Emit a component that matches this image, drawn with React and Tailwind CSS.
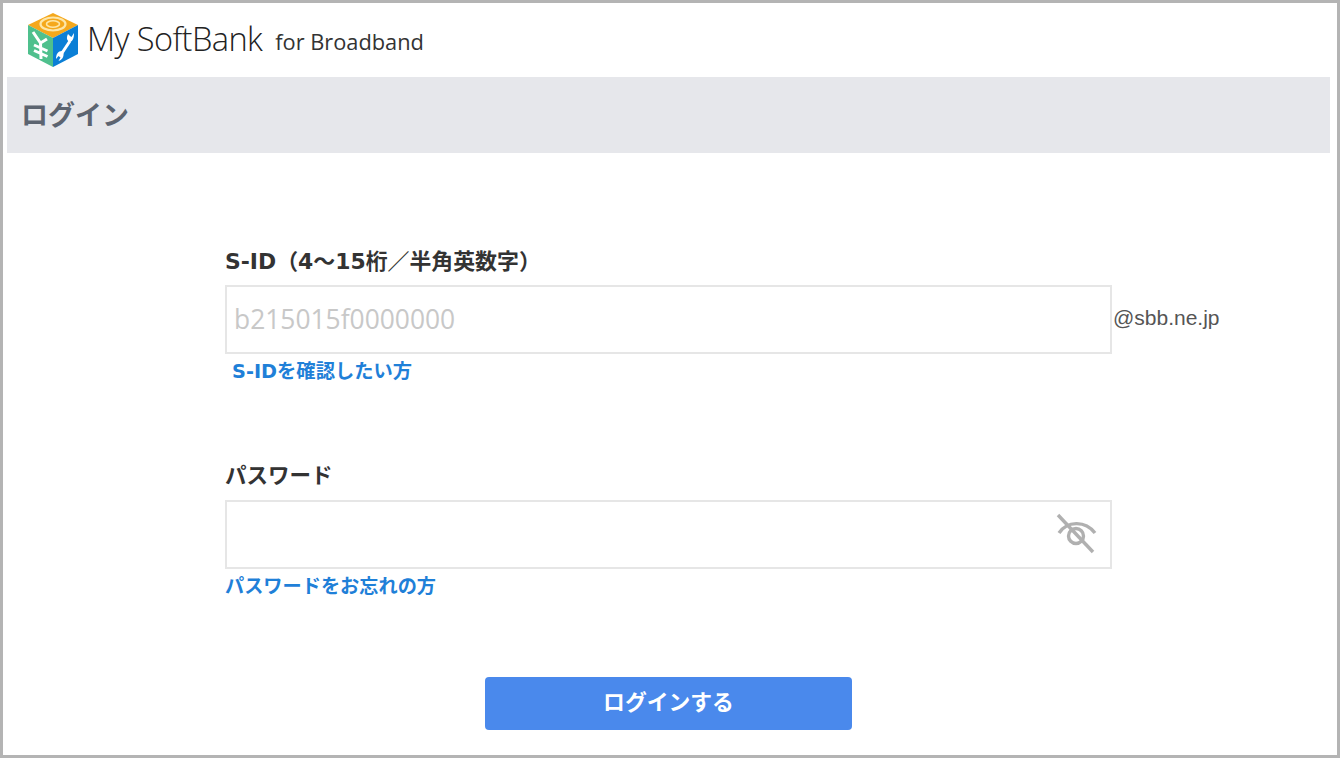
const jp = "font-['Liberation_Sans','Noto_Sans_CJK_JP',sans-serif]";
const wide = "font-['DejaVu_Sans','Noto_Sans_CJK_JP',sans-serif]";

const CubeLogo = () => (
  <svg width="52" height="56" viewBox="0 0 52 56" className="shrink-0">
    <polygon points="26,1 51,13 26,26 1,13" fill="#f5a81c" />
    <polygon points="1,13 26,26 26,55 1,42" fill="#4fc08d" />
    <polygon points="51,13 26,26 26,55 51,42" fill="#0b7fd6" />
    <ellipse cx="26" cy="12" rx="12.5" ry="6.5" fill="none" stroke="#fde6a8" strokeWidth="2.2" />
    <ellipse cx="26" cy="12" rx="6.5" ry="3.2" fill="none" stroke="#fde6a8" strokeWidth="1.6" />
    <path d="M6 20 L13.5 31 L20 27 M13.5 31 L14 47 M7 33 L20.5 39 M7 38.5 L20.5 44.5" fill="none" stroke="#fff" strokeWidth="3" />
    <path d="M33 44 L43 29" fill="none" stroke="#fff" strokeWidth="3" />
    <path d="M41 22 C39 26 40 29 43 30 C46 29 47 26 47 21 L44.5 25 L43 24 Z" fill="#fff" />
    <path d="M35 39 C31 39 29 42 29 47 L31.5 44 L33.5 45.5 L31.5 49 C35 48 37 45 36.5 41 Z" fill="#fff" />
  </svg>
);

const HiddenEye = () => (
  <svg width="42" height="42" viewBox="0 0 42 42" fill="none" stroke="#b0b0b0" strokeWidth="3.4" className="absolute right-[13px] top-[10px]">
    <path d="M4 21 C12 9 30 8 40 21" />
    <circle cx="21" cy="24" r="7.5" />
    <path d="M3 3 L38 40" />
  </svg>
);

export default function App() {
  return (
    <div className={`w-[1340px] h-[758px] border-[3px] border-[#b4b4b4] bg-white overflow-hidden ${jp}`}>
      <header className="h-[74px] flex items-center pl-[24px]">
        <CubeLogo />
        <span className="ml-[8px] mb-[1px] text-[32.6px] leading-none text-[#222] font-['Open_Sans',sans-serif] font-light tracking-[-0.6px]">My SoftBank</span>
        <span className="ml-[13px] mt-[3px] text-[21.8px] leading-none text-[#333] font-['Open_Sans',sans-serif]">for Broadband</span>
      </header>

      <div className="mx-[4px] w-[1323px] h-[76px] bg-[#e6e7eb] flex items-center pl-[14px] pt-[3px]">
        <h1 className="text-[27px] font-bold text-[#5c6470]">ログイン</h1>
      </div>

      <main className="pl-[222px] pt-[95px]">
        <label className={`block text-[21.9px] leading-[28px] font-bold text-[#333] ${wide}`}>S-ID（4～15桁／半角英数字）</label>
        <div className="mt-[9px] flex items-center">
          <div className="w-[887px] h-[69px] border-2 border-[#e6e6e6] flex items-center pl-[7px] text-[26.4px] text-[#c8c8c8] font-['Open_Sans',sans-serif]">
            b215015f0000000
          </div>
          <span className="ml-[1px] mb-[3px] text-[21px] text-[#555]">@sbb.ne.jp</span>
        </div>
        <a className={`block mt-[5px] ml-[7px] text-[19.3px] leading-[26px] font-bold text-[#1f80d8] ${wide}`}>S-IDを確認したい方</a>

        <label className="block mt-[77px] text-[21.5px] leading-[28px] font-bold text-[#333]">パスワード</label>
        <div className="relative mt-[10px] w-[887px] h-[69px] border-2 border-[#e6e6e6]">
          <HiddenEye />
        </div>
        <a className="block mt-[5px] text-[19.2px] leading-[26px] font-bold text-[#1f80d8]">パスワードをお忘れの方</a>

        <button className="block mt-[77px] ml-[260px] w-[367px] h-[53px] rounded-[4px] bg-[#4a89ec] text-white text-[21.8px] font-bold">
          ログインする
        </button>
      </main>
    </div>
  );
}
